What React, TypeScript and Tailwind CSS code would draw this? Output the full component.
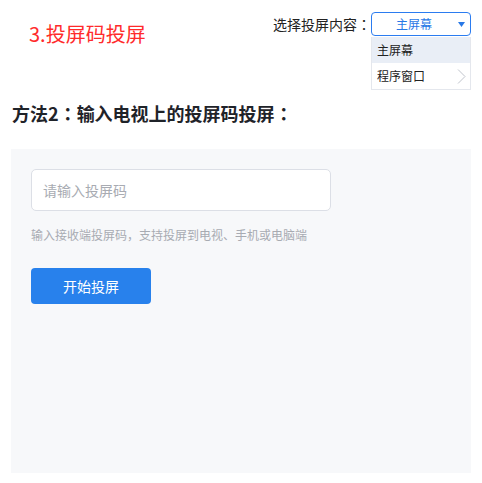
import React from "react";

const tc = { fontFamily: '"Noto Sans CJK SC", "Noto Sans", sans-serif' };
const centeredColon = {
  fontFamily: '"Noto Sans CJK TC", "Noto Sans CJK SC", sans-serif',
};

export default function App() {
  return (
    <div
      className="relative w-[482px] h-[483px] bg-white overflow-hidden"
      style={tc}
    >
      <div className="flex items-start justify-between h-[48px] pt-[12px] pr-[11px]">
        <div className="ml-[29px] mt-[8px] text-[20px] leading-[28px] text-[#ff2b2b]">
          3.投屏码投屏
        </div>
        <div className="flex items-center h-[24px]">
          <span className="text-[14px] leading-[24px] text-[#222]">
            选择投屏内容<span style={centeredColon}>：</span>
          </span>
          <div className="relative w-[100px] h-[24px]">
            <div className="h-[24px] border border-[#2b7cf0] rounded-[4px] flex items-center justify-center pr-[14px] text-[12px] text-[#2878e6] bg-white">
              主屏幕
            </div>
            <svg
              className="absolute right-[6px] top-[10px]"
              width="7"
              height="5"
              viewBox="0 0 7 5"
            >
              <polygon points="0,0 7,0 3.5,5" fill="#2878e6" />
            </svg>
            <div className="absolute left-0 top-[25px] w-[100px] border border-t-0 border-[#e4e7ed] bg-white">
              <div className="h-[26px] flex items-center pl-[5px] bg-[#e9eef6] text-[12px] text-[#222]">
                主屏幕
              </div>
              <div className="relative h-[26px] flex items-center pl-[5px] text-[12px] text-[#222]">
                程序窗口
                <svg
                  className="absolute right-[4px] top-[6px]"
                  width="9"
                  height="15"
                  viewBox="0 0 9 15"
                >
                  <polyline
                    points="1,0.5 8,7.5 1,14.5"
                    fill="none"
                    stroke="#c0c4cc"
                    strokeWidth="1"
                  />
                </svg>
              </div>
            </div>
          </div>
        </div>
      </div>

      <div className="mt-[52px] ml-[12px] text-[18px] leading-[26px] font-bold text-[#1f2329]">
        方法2<span style={centeredColon}>：</span>输入电视上的投屏码投屏
        <span style={centeredColon}>：</span>
      </div>

      <div className="mt-[23px] ml-[11px] w-[460px] h-[324px] bg-[#f7f8fa] px-[20px] pt-[20px]">
        <div className="w-[300px] h-[42px] rounded-[5px] border border-[#dcdfe6] bg-white flex items-center px-[11px] text-[14px] text-[#a8abb2]">
          请输入投屏码
        </div>
        <div className="mt-[15px] text-[12px] leading-[18px] text-[#a8abb2]">
          输入接收端投屏码，支持投屏到电视、手机或电脑端
        </div>
        <button className="mt-[24px] w-[120px] h-[36px] rounded-[4px] bg-[#2881ec] text-white text-[14px] flex items-center justify-center">
          开始投屏
        </button>
      </div>
    </div>
  );
}
